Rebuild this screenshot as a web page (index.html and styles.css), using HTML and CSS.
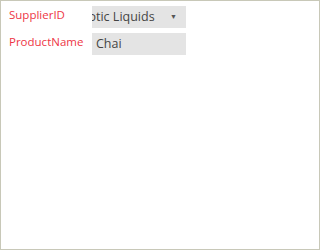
FILE: index.html
```html
<!DOCTYPE html>
<html lang="en">
<head>
    <meta charset="UTF-8">
    <title>Product editor</title>
    <link rel="stylesheet" href="styles.css">
</head>
<body>
    <div class="frame">
        <div class="form">
            <label class="label" for="supplier">SupplierID</label>
            <div class="combo" id="supplier">
                <span class="combo-text">Exotic Liquids</span>
                <span class="combo-arrow">&#9660;</span>
            </div>
            <label class="label" for="product">ProductName</label>
            <div class="textbox" id="product">Chai</div>
        </div>
    </div>
</body>
</html>
```

FILE: styles.css
```css
html, body {
    margin: 0;
    height: 100%;
}
body {
    font-family: "Open Sans", "Noto Sans", sans-serif;
    background-color: #fff;
}
.frame {
    box-sizing: border-box;
    width: 320px;
    height: 250px;
    border: 1px solid #c8c8b8;
    padding: 5px 0 0 8px;
}
.form {
    display: grid;
    grid-template-columns: 83px 94px;
    row-gap: 5px;
}
.label {
    color: #ee3545;
    font-size: 11.5px;
    line-height: 18px;
}
.combo, .textbox {
    box-sizing: border-box;
    height: 22px;
    background-color: #e4e4e4;
    color: #444;
    font-size: 12.5px;
    line-height: 22px;
    overflow: hidden;
    white-space: nowrap;
}
.combo {
    display: flex;
    align-items: center;
    padding-right: 9px;
}
.combo-text {
    flex: 1;
    overflow: hidden;
    text-indent: -17px;
}
.combo-arrow {
    font-size: 7px;
    color: #555;
}
.textbox {
    padding-left: 4px;
}
```
